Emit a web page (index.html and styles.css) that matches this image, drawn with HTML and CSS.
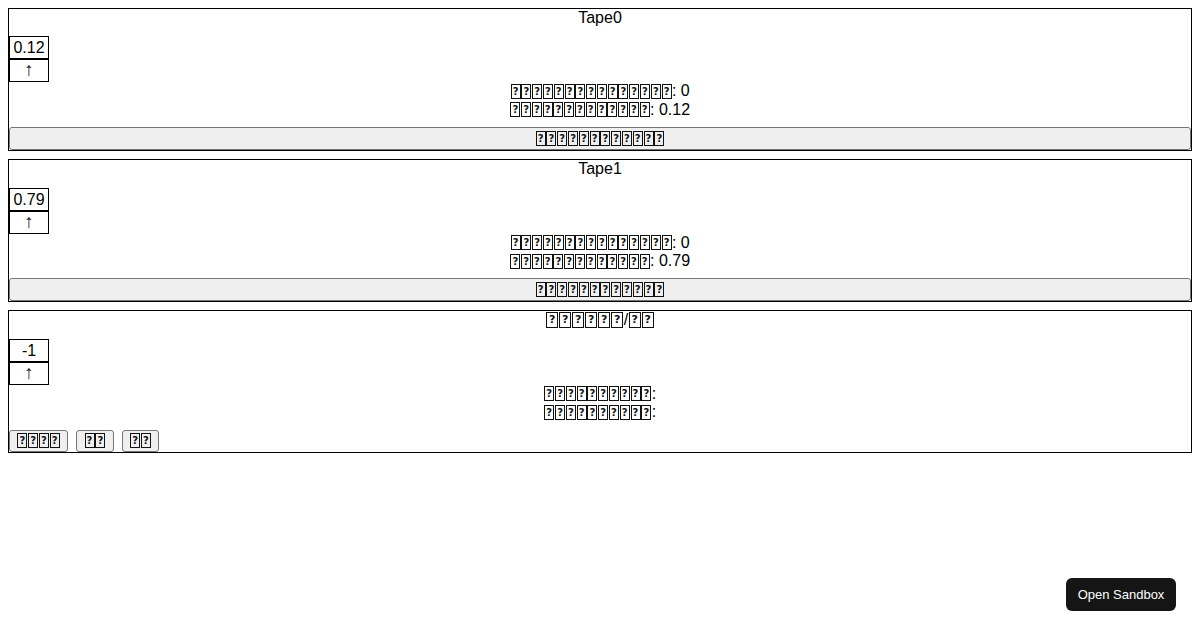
FILE: index.html
```html
<!DOCTYPE html>
<html>
<head>
<meta charset="utf-8">
<title>Tapes</title>
<link rel="stylesheet" href="styles.css">
</head>
<body>
<div class="panel">
  <div class="title">Tape0</div>
  <div class="tape">
    <div class="col">
      <div class="cell">0.12</div>
      <div class="cell arrow">↑</div>
    </div>
  </div>
  <div class="info"><i class="t">?</i><i class="t">?</i><i class="t">?</i><i class="t">?</i><i class="t">?</i><i class="t">?</i><i class="t">?</i><i class="t">?</i><i class="t">?</i><i class="t">?</i><i class="t">?</i><i class="t">?</i><i class="t">?</i><i class="t">?</i><i class="t">?</i>: 0</div>
  <div class="info"><i class="t">?</i><i class="t">?</i><i class="t">?</i><i class="t">?</i><i class="t">?</i><i class="t">?</i><i class="t">?</i><i class="t">?</i><i class="t">?</i><i class="t">?</i><i class="t">?</i><i class="t">?</i><i class="t">?</i>: 0.12</div>
  <button class="btn wide"><i class="t">?</i><i class="t">?</i><i class="t">?</i><i class="t">?</i><i class="t">?</i><i class="t">?</i><i class="t">?</i><i class="t">?</i><i class="t">?</i><i class="t">?</i><i class="t">?</i><i class="t">?</i></button>
</div>
<div class="panel">
  <div class="title">Tape1</div>
  <div class="tape">
    <div class="col">
      <div class="cell">0.79</div>
      <div class="cell arrow">↑</div>
    </div>
  </div>
  <div class="info"><i class="t">?</i><i class="t">?</i><i class="t">?</i><i class="t">?</i><i class="t">?</i><i class="t">?</i><i class="t">?</i><i class="t">?</i><i class="t">?</i><i class="t">?</i><i class="t">?</i><i class="t">?</i><i class="t">?</i><i class="t">?</i><i class="t">?</i>: 0</div>
  <div class="info"><i class="t">?</i><i class="t">?</i><i class="t">?</i><i class="t">?</i><i class="t">?</i><i class="t">?</i><i class="t">?</i><i class="t">?</i><i class="t">?</i><i class="t">?</i><i class="t">?</i><i class="t">?</i><i class="t">?</i>: 0.79</div>
  <button class="btn wide"><i class="t">?</i><i class="t">?</i><i class="t">?</i><i class="t">?</i><i class="t">?</i><i class="t">?</i><i class="t">?</i><i class="t">?</i><i class="t">?</i><i class="t">?</i><i class="t">?</i><i class="t">?</i></button>
</div>
<div class="panel">
  <div class="title"><i class="t big">?</i><i class="t big">?</i><i class="t big">?</i><i class="t big">?</i><i class="t big">?</i><i class="t big">?</i>/<i class="t big">?</i><i class="t big">?</i></div>
  <div class="tape">
    <div class="col">
      <div class="cell">-1</div>
      <div class="cell arrow">↑</div>
    </div>
  </div>
  <div class="info"><i class="t">?</i><i class="t">?</i><i class="t">?</i><i class="t">?</i><i class="t">?</i><i class="t">?</i><i class="t">?</i><i class="t">?</i><i class="t">?</i><i class="t">?</i>:</div>
  <div class="info"><i class="t">?</i><i class="t">?</i><i class="t">?</i><i class="t">?</i><i class="t">?</i><i class="t">?</i><i class="t">?</i><i class="t">?</i><i class="t">?</i><i class="t">?</i>:</div>
  <div class="actions">
    <button class="btn"><i class="t">?</i><i class="t">?</i><i class="t">?</i><i class="t">?</i></button>
    <button class="btn"><i class="t">?</i><i class="t">?</i></button>
    <button class="btn"><i class="t">?</i><i class="t">?</i></button>
  </div>
</div>
<a class="sandbox">Open Sandbox</a>
</body>
</html>
```

FILE: styles.css
```css
body {
  margin: 8px;
  font-family: "Liberation Sans", Arial, sans-serif;
  font-size: 16px;
  line-height: 18.4px;
  color: #000;
  background: #fff;
}

.panel {
  border: 1px solid #000;
  margin-bottom: 8px;
}

.title {
  text-align: center;
}

.tape {
  display: flex;
  margin-top: 9px;
}

.col {
  display: flex;
  flex-direction: column;
}

.cell {
  box-sizing: border-box;
  width: 40px;
  height: 23px;
  border: 1px solid #000;
  text-align: center;
  line-height: 21px;
}

.arrow {
  font-family: "Liberation Sans", Arial, sans-serif;
  font-size: 19px;
  line-height: 20px;
  color: #222;
}

.info {
  text-align: center;
}

/* missing-glyph boxes */
.t {
  display: inline-block;
  box-sizing: border-box;
  width: 10px;
  height: 15px;
  margin: 0 0.4px;
  border: 1px solid #111;
  overflow: hidden;
  vertical-align: -2.5px;
  font-family: "DejaVu Sans", sans-serif;
  font-style: normal;
  font-weight: bold;
  font-size: 10px;
  line-height: 13px;
  text-align: center;
  color: #111;
}

.t.big {
  width: 12px;
  height: 16px;
  margin: 0 0.5px;
  vertical-align: -3px;
  font-size: 11px;
  line-height: 14px;
}

.btn {
  font-family: "Liberation Sans", Arial, sans-serif;
  font-size: 16px;
  line-height: 18.4px;
  color: #000;
  background: #efefef;
  border: 1px solid #767676;
  border-radius: 3px;
  padding: 0 7px;
  margin: 0;
}

.wide {
  display: block;
  width: 100%;
  height: 23px;
  margin-top: 8px;
}

.actions {
  display: flex;
  gap: 8px;
  margin-top: 8px;
}

.actions .btn {
  height: 22px;
}

.sandbox {
  position: fixed;
  right: 24px;
  bottom: 19px;
  width: 110px;
  height: 33px;
  box-sizing: border-box;
  background: #151515;
  color: #fff;
  border-radius: 6px;
  font-size: 13px;
  line-height: 33px;
  text-align: center;
}
```
